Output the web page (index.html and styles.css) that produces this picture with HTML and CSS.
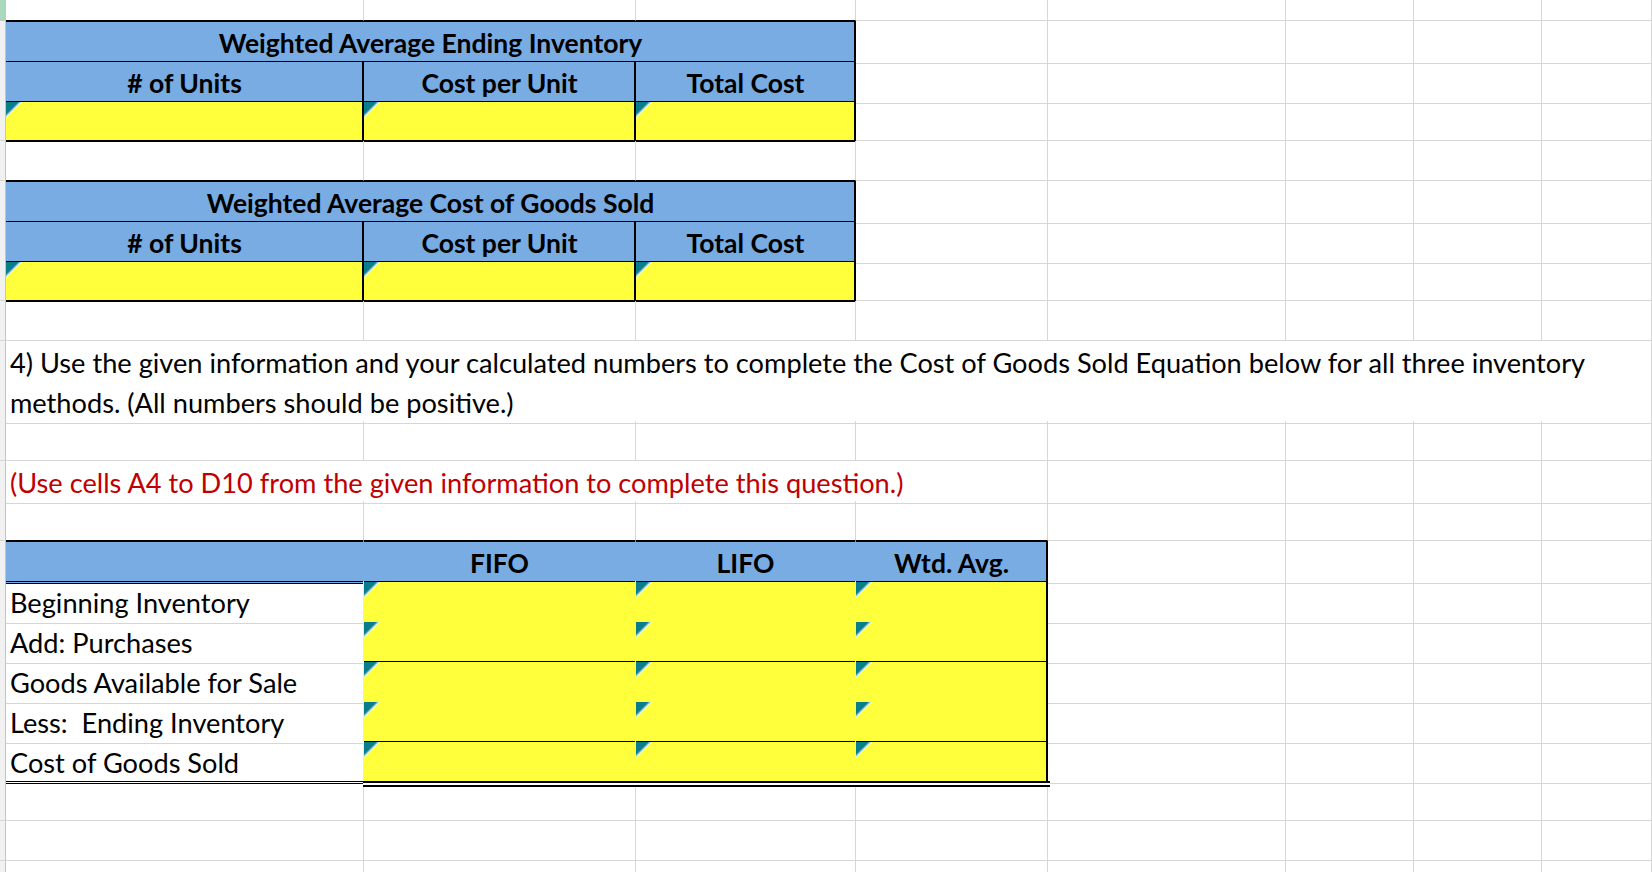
FILE: index.html
```html
<!DOCTYPE html>
<html lang="en">
<head>
<meta charset="utf-8">
<title>Cost of Goods Sold</title>
<link rel="stylesheet" href="styles.css">
</head>
<body>
<div class="sheet">
  <div class="row r0">
    <div class="g sel"></div>
    <div class="c bb"></div><div class="c bb"></div><div class="c bb"></div>
    <div class="c"></div><div class="c"></div><div class="c"></div><div class="c"></div><div class="c"></div>
  </div>
  <div class="row">
    <div class="g"></div>
    <div class="c blue hd span3 bt br bb">Weighted Average Ending Inventory</div>
    <div class="c"></div><div class="c"></div><div class="c"></div><div class="c"></div><div class="c"></div>
  </div>
  <div class="row">
    <div class="g"></div>
    <div class="c blue hd bt br bb"># of Units</div>
    <div class="c blue hd bt br bb">Cost per Unit</div>
    <div class="c blue hd bt br bb">Total Cost</div>
    <div class="c"></div><div class="c"></div><div class="c"></div><div class="c"></div><div class="c"></div>
  </div>
  <div class="row">
    <div class="g"></div>
    <div class="c yel tri bt br bb"></div>
    <div class="c yel tri bt br bb"></div>
    <div class="c yel tri bt br bb"></div>
    <div class="c"></div><div class="c"></div><div class="c"></div><div class="c"></div><div class="c"></div>
  </div>
  <div class="row">
    <div class="g"></div>
    <div class="c bt bb"></div><div class="c bt bb"></div><div class="c bt bb"></div>
    <div class="c"></div><div class="c"></div><div class="c"></div><div class="c"></div><div class="c"></div>
  </div>
  <div class="row">
    <div class="g"></div>
    <div class="c blue hd span3 bt br bb">Weighted Average Cost of Goods Sold</div>
    <div class="c"></div><div class="c"></div><div class="c"></div><div class="c"></div><div class="c"></div>
  </div>
  <div class="row">
    <div class="g"></div>
    <div class="c blue hd bt br bb"># of Units</div>
    <div class="c blue hd bt br bb">Cost per Unit</div>
    <div class="c blue hd bt br bb">Total Cost</div>
    <div class="c"></div><div class="c"></div><div class="c"></div><div class="c"></div><div class="c"></div>
  </div>
  <div class="row">
    <div class="g"></div>
    <div class="c yel tri bt br bb"></div>
    <div class="c yel tri bt br bb"></div>
    <div class="c yel tri bt br bb"></div>
    <div class="c"></div><div class="c"></div><div class="c"></div><div class="c"></div><div class="c"></div>
  </div>
  <div class="row">
    <div class="g"></div>
    <div class="c bt"></div><div class="c bt"></div><div class="c bt"></div>
    <div class="c"></div><div class="c"></div><div class="c"></div><div class="c"></div><div class="c"></div>
  </div>
  <div class="row r2x">
    <div class="g"></div>
    <div class="c txt span8">4) Use the given information and your calculated numbers to complete the Cost of Goods Sold Equation below for all three inventory methods. (All numbers should be positive.)</div>
  </div>
  <div class="row">
    <div class="g"></div>
    <div class="c"></div><div class="c"></div><div class="c"></div><div class="c"></div>
    <div class="c"></div><div class="c"></div><div class="c"></div><div class="c"></div>
  </div>
  <div class="row">
    <div class="g"></div>
    <div class="c txt red span4">(Use cells A4 to D10 from the given information to complete this question.)</div>
    <div class="c"></div><div class="c"></div><div class="c"></div><div class="c"></div>
  </div>
  <div class="row">
    <div class="g"></div>
    <div class="c bb"></div><div class="c bb"></div><div class="c bb"></div><div class="c bb"></div>
    <div class="c"></div><div class="c"></div><div class="c"></div><div class="c"></div>
  </div>
  <div class="row">
    <div class="g"></div>
    <div class="c blue hd bt bb"></div>
    <div class="c blue hd bt bb">FIFO</div>
    <div class="c blue hd bt bb">LIFO</div>
    <div class="c blue hd bt bb br">Wtd. Avg.</div>
    <div class="c"></div><div class="c"></div><div class="c"></div><div class="c"></div>
  </div>
  <div class="row">
    <div class="g"></div>
    <div class="c txt lbl bt">Beginning Inventory</div>
    <div class="c yel tri bt"></div><div class="c yel tri bt"></div><div class="c yel tri bt br"></div>
    <div class="c"></div><div class="c"></div><div class="c"></div><div class="c"></div>
  </div>
  <div class="row">
    <div class="g"></div>
    <div class="c txt lbl">Add: Purchases</div>
    <div class="c yel tri bb"></div><div class="c yel tri bb"></div><div class="c yel tri bb br"></div>
    <div class="c"></div><div class="c"></div><div class="c"></div><div class="c"></div>
  </div>
  <div class="row">
    <div class="g"></div>
    <div class="c txt lbl">Goods Available for Sale</div>
    <div class="c yel tri bt"></div><div class="c yel tri bt"></div><div class="c yel tri bt br"></div>
    <div class="c"></div><div class="c"></div><div class="c"></div><div class="c"></div>
  </div>
  <div class="row">
    <div class="g"></div>
    <div class="c txt lbl">Less:&nbsp; Ending Inventory</div>
    <div class="c yel tri bb"></div><div class="c yel tri bb"></div><div class="c yel tri bb br"></div>
    <div class="c"></div><div class="c"></div><div class="c"></div><div class="c"></div>
  </div>
  <div class="row">
    <div class="g"></div>
    <div class="c txt lbl bb">Cost of Goods Sold</div>
    <div class="c yel tri bt dbl"></div><div class="c yel tri bt dbl"></div><div class="c yel tri bt br dbl end"></div>
    <div class="c"></div><div class="c"></div><div class="c"></div><div class="c"></div>
  </div>
  <div class="row">
    <div class="g"></div>
    <div class="c bt"></div><div class="c"></div><div class="c"></div><div class="c"></div>
    <div class="c"></div><div class="c"></div><div class="c"></div><div class="c"></div>
  </div>
  <div class="row">
    <div class="g"></div>
    <div class="c"></div><div class="c"></div><div class="c"></div><div class="c"></div>
    <div class="c"></div><div class="c"></div><div class="c"></div><div class="c"></div>
  </div>
  <div class="row">
    <div class="g"></div>
    <div class="c"></div><div class="c"></div><div class="c"></div><div class="c"></div>
    <div class="c"></div><div class="c"></div><div class="c"></div><div class="c"></div>
  </div>
</div>
</body>
</html>
```
FILE: styles.css
```css
html, body {
  margin: 0;
  padding: 0;
  background: #ffffff;
  overflow: hidden;
}
body {
  width: 1652px;
  height: 872px;
  font-family: Lato, "Liberation Sans", sans-serif;
  color: #000;
}
.sheet {
  display: flex;
  flex-direction: column;
}
.row {
  display: grid;
  grid-template-columns: 6px 358px 272px 220px 192px 238px 128px 128px 1fr;
  height: 40px;
  flex: none;
}
.row.r0 { height: 21px; }
.row.r2x { height: 80px; }

.g {
  box-sizing: border-box;
  background: #f1f1f1;
  border-right: 1px solid #c4c4c4;
  border-bottom: 1px solid #d6d6d6;
}
.g.sel { background: #a9d8bc; border-bottom-color: #c9c9c9; }

.c {
  --t: 0 0 #0000;
  --r: 0 0 #0000;
  position: relative;
  box-sizing: border-box;
  min-width: 0;
  padding-top: 2px;
  border-right: 1px solid #d6d6d6;
  border-bottom: 1px solid #d6d6d6;
  box-shadow: var(--t), var(--r);
  font-size: 27.2px;
  line-height: 40px;
  white-space: nowrap;
}
.span3 { grid-column: span 3; }
.span4 { grid-column: span 4; }
.span8 { grid-column: span 8; }

.txt { padding-left: 4px; }
.r2x .txt { white-space: normal; }
.red { color: #c00000; }

.blue { background: #78ace2; border-right-color: #78ace2; }
.yel { background: #ffff3b; border-right-color: #ffff3b; border-bottom-color: #ffff3b; }
.lbl { border-right-color: #ffff3b; }

.hd {
  text-align: center;
  font-weight: 700;
  font-size: 26.5px;
}

.bb { border-bottom-color: #000; }
.bt { --t: inset 0 1px #000; }
.br { border-right-color: #000; --r: inset -1px 0 #000; }

/* double bottom border, drawn over the gridline like Excel does */
.dbl::after {
  content: "";
  position: absolute;
  z-index: 1;
  left: -1px;
  right: -1px;
  bottom: -4px;
  height: 6px;
  box-sizing: border-box;
  background: #ffffff;
  border-top: 2px solid #000;
  border-bottom: 2px solid #000;
}
.dbl.end::after { right: -3px; }

.tri::before {
  content: "";
  position: absolute;
  top: 1px;
  left: 0;
  width: 17px;
  height: 16px;
  background: linear-gradient(135deg, #087d8c 0%, #087d8c 36%, #f2f7f0 47%, rgba(255, 255, 255, 0) 50%);
}
```
